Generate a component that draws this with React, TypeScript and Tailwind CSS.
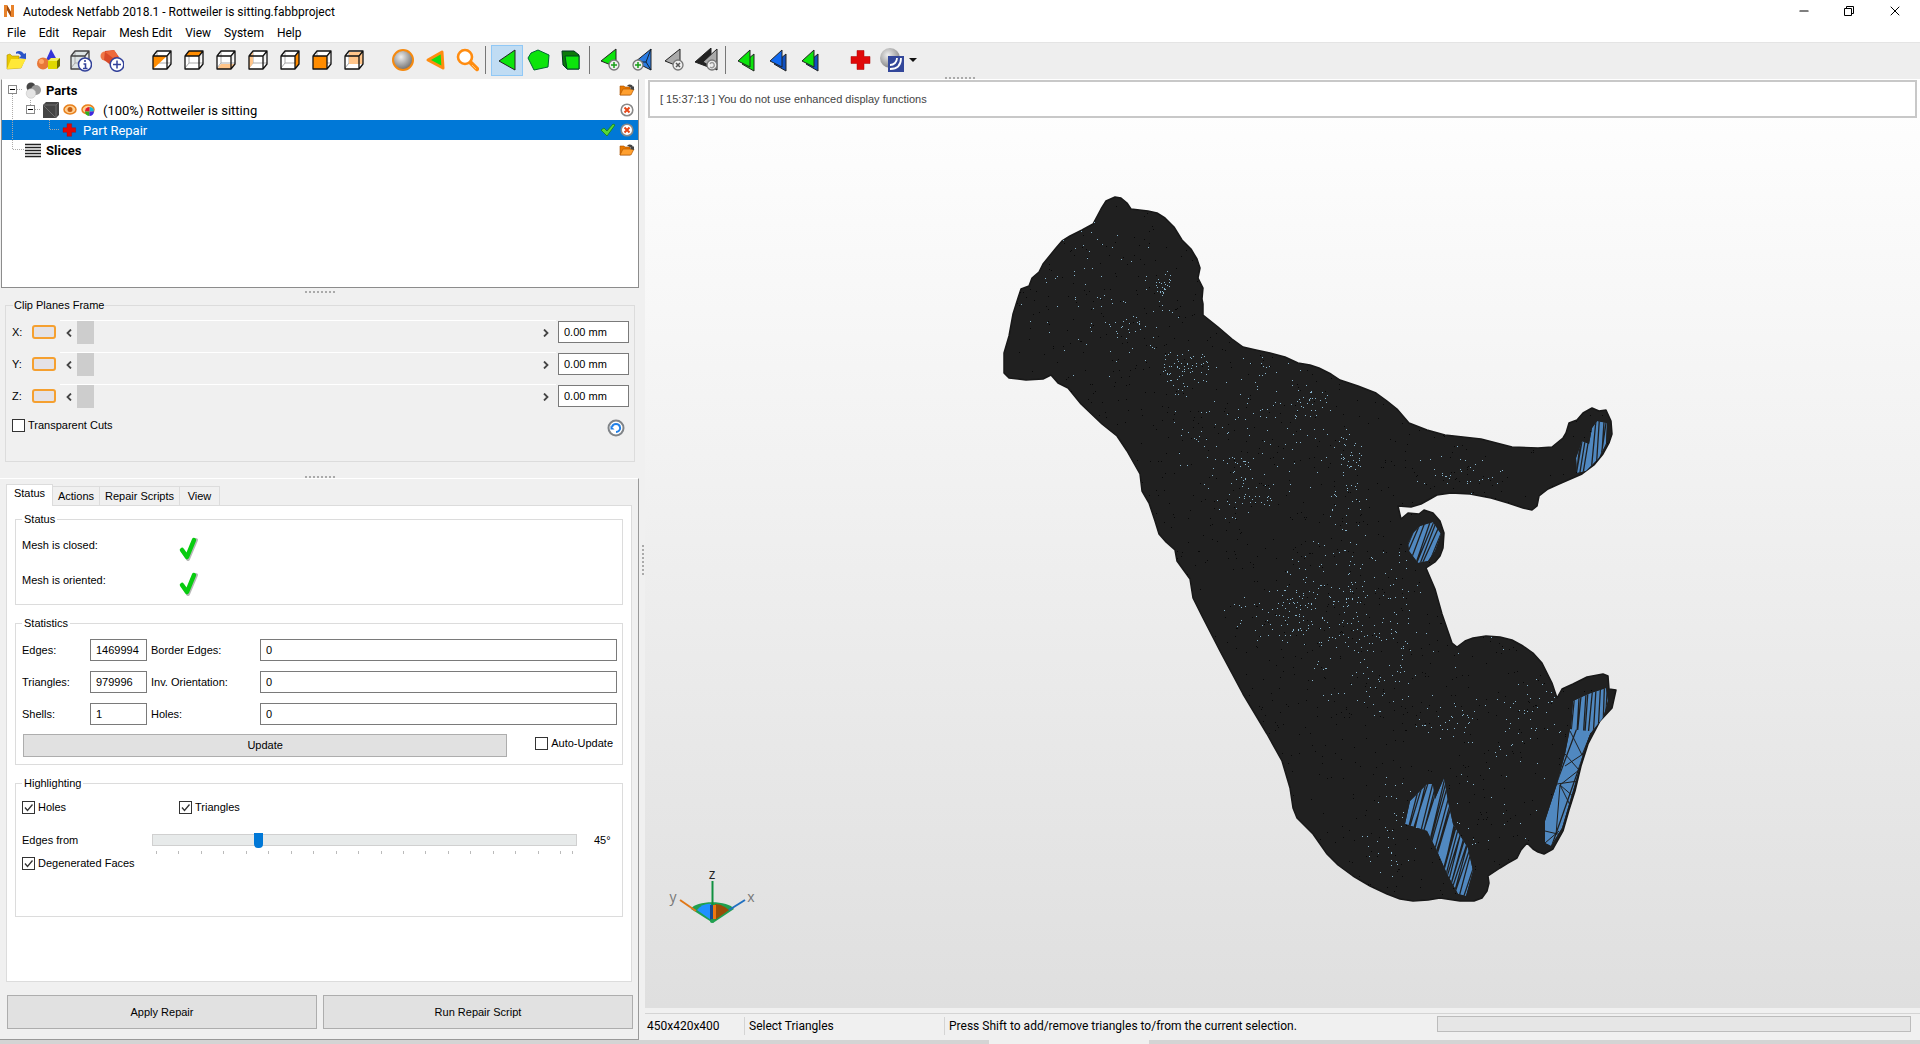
import type { ReactNode } from 'react';
import { Minus, X } from 'lucide-react';

type Point = [number, number];

const ui = 'font-["Liberation_Sans",Arial,sans-serif] text-[11px]';
const chrome = 'font-[Roboto,"Open_Sans",sans-serif] text-[12px]';

/* ---------- Toolbar icons ---------- */

function Svg({ children, size = 24 }: { children: ReactNode; size?: number }) {
  return (
    <svg width={size} height={size} viewBox="0 0 24 24" fill="none" className="shrink-0" aria-hidden="true">
      {children}
    </svg>
  );
}

function FolderIcon() {
  return (
    <Svg>
      <path d="M3 21V7l3-1 2 2h7v3h6l-4 9z" fill="#e8c800" stroke="#b08f00" strokeWidth="0.6" />
      <path d="M3 21 7 11h15l-5 9z" fill="#ffe838" />
      <path d="M12 4c3-2 6-1 8 2l2-1v6l-7-1 2-2c-1-2-3-3-5-2z" fill="#2a55c8" />
    </Svg>
  );
}

function ShapesIcon() {
  return (
    <Svg>
      <path d="M15 1 10 12h11z" fill="#3434d8" />
      <circle cx="7" cy="15.500" r="6" fill="#e87838" />
      <circle cx="5.5" cy="13.500" r="2.500" fill="#ffa868" />
      <path d="M12 13l3-3h9v8l-3 3h-9z" fill="#6b6b00" />
      <path d="M12 13h9v8h-9z" fill="#e0d800" />
      <path d="M12 13l3-3h9l-3 3z" fill="#f4f060" />
    </Svg>
  );
}

function WireCube({ stroke = '#111', children }: { stroke?: string; children?: ReactNode }) {
  return (
    <g stroke={stroke} strokeWidth="1.300" strokeLinejoin="round">
      <path d="M7 3v12h14M7 15l-4 5" stroke="#aaa" strokeWidth="1" />
      {children}
      <path d="M3 8h14v13H3zM3 8l4-5h14l-4 5M21 3v13l-4 5" />
    </g>
  );
}

function InfoCubeIcon() {
  return (
    <Svg>
      <path d="M3 8h14v13H3zM3 8l4-5h14l-4 5M21 3v13l-4 5" fill="#dde4e4" />
      <WireCube stroke="#444" />
      <circle cx="17" cy="16.500" r="6.500" fill="#fff" stroke="#33429a" strokeWidth="1.500" />
      <path d="M17 12v2M15.500 16h2v4.500M15 20.500h4.500" stroke="#33429a" strokeWidth="1.600" />
    </Svg>
  );
}

function AddPartIcon() {
  return (
    <Svg>
      <circle cx="5" cy="8" r="4.500" fill="#f07848" />
      <path d="M5 3 14 2l5 7-7 9L4 12z" fill="#d84a28" />
      <path d="M5 4 14 2l4 6-5 2z" fill="#ee6a3c" />
      <circle cx="17" cy="16.500" r="6.800" fill="#fff" stroke="#33429a" strokeWidth="1.500" />
      <path d="M17 12.500v8M13 16.500h8" stroke="#33429a" strokeWidth="1.500" />
    </Svg>
  );
}

const cubeFaces: { name: string; path: string; fill: string }[] = [
  { name: 'Isometric view', path: 'M3 8h14L3 21z', fill: '#ff8c00' },
  { name: 'Top view', path: 'M3 8l4-5h14l-4 5z', fill: '#ff8c00' },
  { name: 'Bottom view', path: 'M3 21l4-5h14l-4 5z', fill: '#ffc58a' },
  { name: 'Left view', path: 'M3 8l4-5v12l-4 6z', fill: '#ffc58a' },
  { name: 'Right view', path: 'M21 3v13l-4 5V8z', fill: '#ff8c00' },
  { name: 'Front view', path: 'M3 8h14v13H3z', fill: '#ff8c00' },
  { name: 'Back view', path: 'M7 4h14v12H7z', fill: '#ffc58a' },
];

function CubeViewIcon({ path, fill }: { path: string; fill: string }) {
  return (
    <Svg>
      <path d="M3 8h14v13H3zM3 8l4-5h14l-4 5M21 3v13l-4 5" fill="#fff" />
      <WireCube>
        <path d={path} fill={fill} stroke="none" />
      </WireCube>
    </Svg>
  );
}

function SphereIcon() {
  return (
    <Svg>
      <defs>
        <radialGradient id="steel" cx="0.400" cy="0.350" r="0.700">
          <stop offset="0" stopColor="#eee" />
          <stop offset="1" stopColor="#666" />
        </radialGradient>
      </defs>
      <circle cx="12" cy="12" r="10" fill="url(#steel)" stroke="#f58a10" strokeWidth="2" />
    </Svg>
  );
}

function ZoomTriangleIcon() {
  return (
    <Svg>
      <path d="M5 12 19 4l1 16z" fill="#10e010" stroke="#ff8c10" strokeWidth="3" strokeLinejoin="round" />
    </Svg>
  );
}

function MagnifierIcon() {
  return (
    <Svg>
      <circle cx="10" cy="9" r="7" fill="#fff" stroke="#ff8c10" strokeWidth="2.600" />
      <path d="M16 15l6 6" stroke="#ff8c10" strokeWidth="4.500" strokeLinecap="round" />
      <path d="M17 17l4 4" stroke="#ffc070" strokeWidth="1" />
    </Svg>
  );
}

function Triangle({ fill = '#0ce40c', d = 'M4 13 20 2v20z' }: { fill?: string; d?: string }) {
  return <path d={d} fill={fill} stroke="#222" strokeWidth="1" strokeLinejoin="round" />;
}

function PentagonIcon() {
  return (
    <Svg>
      <path d="M11 2 22 7l-1 12-14 3L1 10l3-5z" fill="#0ce40c" stroke="#063" strokeWidth="1" />
    </Svg>
  );
}

function GreenCubeIcon() {
  return (
    <Svg>
      <path d="M3 3h12l5 4v14H8l-4-4z" fill="#0a7a0a" stroke="#032" />
      <path d="M6 8h14v13H8z" fill="#0ce40c" stroke="#042" />
    </Svg>
  );
}

function Badge({ cx, sign, color }: { cx: number; sign: string; color: string }) {
  return (
    <>
      <circle cx={cx} cy="17" r="5" fill="#eee" stroke="#777" strokeWidth="1.300" />
      <path d={sign} stroke={color} strokeWidth="1.500" />
    </>
  );
}

function DoubleTriangle({ front, back }: { front: string; back: string }) {
  return (
    <Svg>
      <Triangle fill={back} d="M7 16 19 6v17z" />
      <Triangle fill={front} d="M3 13 15 2v17z" />
    </Svg>
  );
}

function RedCross({ size = 24 }: { size?: number }) {
  return (
    <Svg size={size}>
      <path d="M9 2.500h7v6h6v7h-6v6h-7v-6h-6v-7h6z" fill="#e00808" stroke="#a80000" strokeOpacity="0.500" />
    </Svg>
  );
}

function ScanIcon() {
  return (
    <Svg>
      <circle cx="10" cy="10" r="10" fill="url(#steel)" fillOpacity="0.800" />
      <path d="M8 8h16v16H8z" fill="#33479a" />
      <path d="M10 21c7 0 11-4 11-11M10 17c4 0 7-3 7-7" stroke="#fff" strokeWidth="1.800" />
    </Svg>
  );
}

function ToolButton({ label, active, children }: { label: string; active?: boolean; children: ReactNode }) {
  return (
    <button
      type="button"
      aria-label={label}
      className={
        active
          ? 'flex h-[31px] w-8 shrink-0 items-center justify-center border border-[#90c8f6] bg-[#c0dcf3]'
          : 'flex h-[31px] w-8 shrink-0 items-center justify-center'
      }
    >
      {children}
    </button>
  );
}

function ToolSeparator() {
  return <div className="mr-[5px] ml-[2px] h-7 w-px shrink-0 bg-[#777]" />;
}

function Toolbar() {
  return (
    <div className="flex h-[37px] items-center border-t border-[#e4e4e4] bg-[#eeeeee] pb-[2px]">
      <ToolButton label="Open"><FolderIcon /></ToolButton>
      <ToolButton label="Add primitive"><ShapesIcon /></ToolButton>
      <ToolButton label="Part information"><InfoCubeIcon /></ToolButton>
      <ToolButton label="Add part"><AddPartIcon /></ToolButton>
      <div className="w-[18px] shrink-0" />
      {cubeFaces.map((face) => (
        <ToolButton key={face.name} label={face.name}>
          <CubeViewIcon path={face.path} fill={face.fill} />
        </ToolButton>
      ))}
      <div className="w-[17px] shrink-0" />
      <ToolButton label="Zoom to part"><SphereIcon /></ToolButton>
      <ToolButton label="Zoom to triangle"><ZoomTriangleIcon /></ToolButton>
      <ToolButton label="Zoom"><MagnifierIcon /></ToolButton>
      <ToolSeparator />
      <ToolButton label="Select triangles" active><Svg><Triangle /></Svg></ToolButton>
      <ToolButton label="Select surfaces"><PentagonIcon /></ToolButton>
      <ToolButton label="Select shells"><GreenCubeIcon /></ToolButton>
      <ToolSeparator />
      <ToolButton label="Expand selection">
        <Svg><Triangle d="M2 13 17 1v18z" /><Badge cx={15} sign="M15 14v6M12 17h6" color="#18a018" /></Svg>
      </ToolButton>
      <ToolButton label="Shrink selection">
        <Svg>
          <Triangle fill="#2a7ae0" d="M4 14 20 1v21z" />
          <path d="M20 1l-5 13 5 8M4 14h11" stroke="#123" />
          <Badge cx={7} sign="M7 14v6M4 17h6" color="#18a018" />
        </Svg>
      </ToolButton>
      <ToolButton label="Remove selected">
        <Svg><Triangle fill="#aaa" d="M2 13 17 1v18z" /><Badge cx={15} sign="M13 15l4 4M17 15l-4 4" color="#555" /></Svg>
      </ToolButton>
      <ToolButton label="Revert selection">
        <Svg>
          <Triangle fill="#222" d="M0 14 16 0v20z" />
          <Triangle fill="#aaa" d="M8 14 22 1v21z" />
          <Badge cx={17} sign="M15 19c3 2 5-1 4-3s-3-2-4 0" color="#999" />
        </Svg>
      </ToolButton>
      <ToolSeparator />
      <ToolButton label="Add triangles"><DoubleTriangle front="#0ce40c" back="#0ce40c" /></ToolButton>
      <ToolButton label="Flip triangles"><DoubleTriangle front="#1068f0" back="#1050c0" /></ToolButton>
      <ToolButton label="Mark triangles"><DoubleTriangle front="#0ce40c" back="#1050c0" /></ToolButton>
      <div className="w-[17px] shrink-0" />
      <ToolButton label="Repair"><RedCross /></ToolButton>
      <ToolButton label="Display mode"><ScanIcon /></ToolButton>
      <button type="button" aria-label="More display modes" className="px-px">
        <svg width="8" height="4" viewBox="0 0 8 4"><path d="M0 0h8L4 4z" fill="#111" /></svg>
      </button>
    </div>
  );
}

/* ---------- Title and menu ---------- */

const menuItems = ['File', 'Edit', 'Repair', 'Mesh Edit', 'View', 'System', 'Help'];

function TitleBar() {
  return (
    <header className={`bg-white text-black ${chrome}`}>
      <div className="flex h-[22px] items-center">
        <svg width="12" height="14" viewBox="0 0 12 14" className="ml-[3px]" aria-hidden="true">
          <path d="M1 13V1h3l4 7V1h3v12H8L4 6v7z" fill="#e8822a" />
          <path d="M4 1l4 7v5L4 6z" fill="#9c4a10" />
        </svg>
        <h1 className="ml-2 pt-px">Autodesk Netfabb 2018.1 - Rottweiler is sitting.fabbproject</h1>
        <div className="ml-auto flex items-center gap-[32px] pr-[17px]">
          <button type="button" aria-label="Minimize"><Minus size={14} strokeWidth={2} /></button>
          <button type="button" aria-label="Restore">
            <svg width="12" height="12" viewBox="0 0 12 12" fill="none" stroke="#000">
              <path d="M1.500 3.500h7v7h-7zM3.500 3.500v-2h7v7h-2" />
            </svg>
          </button>
          <button type="button" aria-label="Close"><X size={16} strokeWidth={1.500} /></button>
        </div>
      </div>
      <nav className="flex h-5 items-center gap-[13px] pt-[2px] pl-[7px]">
        {menuItems.map((item) => (
          <button key={item} type="button">{item}</button>
        ))}
      </nav>
    </header>
  );
}

/* ---------- Parts tree ---------- */

function TreeLines({ width, dots, box }: { width: number; dots: string; box?: number }) {
  return (
    <svg width={width} height="20" viewBox={`0 0 ${width} 20`} fill="none" className="shrink-0" shapeRendering="crispEdges">
      <path d={dots} stroke="#aaa" strokeDasharray="1 1" />
      {box !== undefined && (
        <>
          <rect x={box + 0.5} y="5.500" width="8" height="8" fill="#fff" stroke="#888" />
          <path d={`M${box + 2} 9.500h5`} stroke="#000" />
        </>
      )}
    </svg>
  );
}

function OpenFolderButton() {
  return (
    <button type="button" aria-label="Load">
      <svg width="16" height="14" viewBox="0 0 16 14" aria-hidden="true">
        <path d="M1 12V3h4l1 1h5v3h3l-3 5z" fill="#e87800" stroke="#a85000" strokeWidth="0.600" />
        <path d="M1 12 4 6h11l-3 6z" fill="#ffa030" stroke="#a85000" strokeWidth="0.600" />
        <path d="M8 3c2-2 5-2 6 1l1-1v4l-4-1 1-1c-1-1-2-2-4-2z" fill="#444" />
      </svg>
    </button>
  );
}

function RemoveButton() {
  return (
    <button type="button" aria-label="Remove" className="mr-px">
      <svg width="14" height="14" viewBox="0 0 14 14" aria-hidden="true">
        <circle cx="7" cy="7" r="5.800" fill="#fff" stroke="#888" strokeWidth="1.600" />
        <path d="M4.500 4.500l5 5M9.500 4.500l-5 5" stroke="#e84818" strokeWidth="2" />
      </svg>
    </button>
  );
}

function Eye({ colored }: { colored?: boolean }) {
  return (
    <svg width="14" height="14" viewBox="0 0 14 14" className="mr-[4px]" aria-hidden="true">
      <ellipse cx="7" cy="6.500" rx="6" ry="4.500" fill="#ffcf90" stroke="#e8801c" strokeWidth="1.500" />
      {colored ? (
        <>
          <path d="M8.500 8.500V4a4.500 4.500 0 0 1 4.500 4.500z" fill="#10b8d8" />
          <path d="M8.500 8.500H4A4.500 4.500 0 0 1 8.500 4z" fill="#e01830" />
          <path d="M8.500 8.500V13A4.500 4.500 0 0 1 4 8.500z" fill="#30b020" />
          <path d="M8.500 8.500H13A4.500 4.500 0 0 1 8.500 13z" fill="#4028e0" />
        </>
      ) : (
        <circle cx="7" cy="6.500" r="2.500" fill="#c86010" />
      )}
    </svg>
  );
}

function PartsTree() {
  return (
    <ul className='mr-px ml-px h-[209px] border border-[#8c8c8c] border-t-transparent bg-white font-[Roboto,"Open_Sans",sans-serif] text-[13px] leading-5 text-black'>
      <li className="flex h-5 items-center pr-[3px]">
        <TreeLines width={23} dots="M13 9.500h8M10.500 14v6" box={6} />
        <svg width="17" height="17" viewBox="0 0 17 17" aria-hidden="true">
          <circle cx="6" cy="5" r="4.500" fill="#444" />
          <circle cx="11" cy="8" r="5" fill="#999" />
          <circle cx="6" cy="11.500" r="4.800" fill="#e4e4e4" stroke="#bbb" strokeWidth="0.500" />
        </svg>
        <span className="ml-1 flex-1 pt-[2px] font-bold">Parts</span>
        <OpenFolderButton />
      </li>
      <li className="flex h-5 items-center pr-[3px]">
        <TreeLines width={41} dots="M10.500 0v20M28.500 0v6M33 9.500h6" box={24} />
        <svg width="16" height="16" viewBox="0 0 16 16" className="mr-[4px]" aria-hidden="true">
          <path d="M0 3l3-3h13v13l-3 3H0z" fill="#444" />
          <path d="M0 3h13v13M13 3l3-3M1 4l11 11" stroke="#777" strokeWidth="0.800" fill="none" />
        </svg>
        <Eye />
        <Eye colored />
        <span className="ml-[4px] flex-1 pt-[2px]">(100%) Rottweiler is sitting</span>
        <RemoveButton />
      </li>
      <li className="flex h-5 items-center bg-[#0078d7] pr-[3px] text-white">
        <TreeLines width={59} dots="M10.500 0v20M47.500 0v9.500h10" />
        <RedCross size={16} />
        <span className="ml-[6px] flex-1 pt-[2px]">Part Repair</span>
        <svg width="16" height="14" viewBox="0 0 16 14" className="mr-1" aria-hidden="true">
          <path d="M1 7l3-2 3 3 6-7 2 1-8 11z" fill="#58d838" stroke="#188010" strokeWidth="0.800" />
        </svg>
        <RemoveButton />
      </li>
      <li className="flex h-5 items-center pr-[3px]">
        <TreeLines width={23} dots="M10.500 0v9.500h11" />
        <svg width="16" height="15" viewBox="0 0 16 15" aria-hidden="true">
          <path d="M0 1.500h16M0 4.500h16M0 7.500h16M0 10.500h16M0 13.500h16" stroke="#222" strokeWidth="1.500" />
        </svg>
        <span className="ml-[5px] flex-1 pt-[2px] font-bold">Slices</span>
        <OpenFolderButton />
      </li>
    </ul>
  );
}

/* ---------- Shared controls ---------- */

function Grip({ className = '' }: { className?: string }) {
  return <div className={`w-[30px] border-t-2 border-dotted border-[#aaa] ${className}`} />;
}

function CheckBox({ label, checked = false }: { label: string; checked?: boolean }) {
  return (
    <label className="relative flex h-4 items-center gap-[3px]">
      <input
        type="checkbox"
        defaultChecked={checked}
        className="peer size-[13px] appearance-none border border-[#333] bg-white"
      />
      <svg
        viewBox="0 0 13 13"
        fill="none"
        className="pointer-events-none invisible absolute left-0 size-[13px] peer-checked:visible"
      >
        <path d="M3 6.500l2.500 3L10.500 3.500" stroke="#333" strokeWidth="1.300" />
      </svg>
      <span>{label}</span>
    </label>
  );
}

function ClipRow({ axis }: { axis: string }) {
  const id = `clip-${axis}`;
  return (
    <div className="flex h-8 items-center">
      <label htmlFor={id} className="w-5">{axis}:</label>
      <button
        type="button"
        aria-label={`Toggle ${axis} plane`}
        className="h-[14px] w-6 rounded-[3px] border-2 border-[#f5a030] bg-[#e4e2e6]"
      />
      <div className="ml-1 flex h-6 flex-1 items-center border-t border-white">
        <button type="button" aria-label={`Decrease ${axis}`} className="flex w-[17px] justify-center">
          <svg width="6" height="8" viewBox="0 0 6 8" fill="none"><path d="M5 0.500 1.500 4 5 7.500" stroke="#444" strokeWidth="1.800" /></svg>
        </button>
        <input
          type="range"
          aria-label={`${axis} position`}
          defaultValue={0}
          className="h-[23px] min-w-0 flex-1 appearance-none bg-transparent [&::-webkit-slider-thumb]:h-[23px] [&::-webkit-slider-thumb]:w-[17px] [&::-webkit-slider-thumb]:appearance-none [&::-webkit-slider-thumb]:bg-[#cdcdcd]"
        />
        <button type="button" aria-label={`Increase ${axis}`} className="flex w-5 justify-center">
          <svg width="6" height="8" viewBox="0 0 6 8" fill="none"><path d="M1 0.500 4.500 4 1 7.500" stroke="#444" strokeWidth="1.800" /></svg>
        </button>
      </div>
      <input
        id={id}
        defaultValue="0.00 mm"
        className="ml-[2px] h-[22px] w-[71px] border border-[#7a7a7a] bg-white px-[5px]"
      />
    </div>
  );
}

function ClipPlanes() {
  return (
    <fieldset className="mx-[5px] mt-1 h-[165px] border border-[#dcdcdc] pr-[5px] pl-[6px]">
      <legend className="ml-px px-[1px] leading-4">Clip Planes Frame</legend>
      <div className="pt-[3px]">
        <ClipRow axis="X" />
        <ClipRow axis="Y" />
        <ClipRow axis="Z" />
      </div>
      <div className="flex items-start justify-between pt-[5px] pr-1">
        <CheckBox label="Transparent Cuts" />
        <button type="button" aria-label="Reset clip planes" className="mt-[2px]">
          <svg width="18" height="18" viewBox="0 0 18 18" fill="none">
            <circle cx="9" cy="9" r="7.500" fill="#fff" stroke="#808488" strokeWidth="2" />
            <path d="M5 8c1-4 7-4 8 0 1 3-2 5-4 5" stroke="#2080e8" strokeWidth="2" />
            <path d="M3.500 6.500v4h4z" fill="#2080e8" />
          </svg>
        </button>
      </div>
    </fieldset>
  );
}

/* ---------- Repair panel ---------- */

const statusRows = ['Mesh is closed:', 'Mesh is oriented:'];

const statistics = [
  { label: 'Edges:', value: '1469994', other: 'Border Edges:', otherValue: '0' },
  { label: 'Triangles:', value: '979996', other: 'Inv. Orientation:', otherValue: '0' },
  { label: 'Shells:', value: '1', other: 'Holes:', otherValue: '0' },
];

function Group({ title, className, children }: { title: string; className: string; children: ReactNode }) {
  return (
    <fieldset className={`border border-[#dcdcdc] pl-[6px] ${className}`}>
      <legend className="px-[2px] leading-4">{title}</legend>
      {children}
    </fieldset>
  );
}

function OkMark() {
  return (
    <svg width="20" height="26" viewBox="0 0 20 26" fill="none" strokeLinecap="round" strokeLinejoin="round">
      <path d="M5 16l5 8L18 5" stroke="#888" strokeOpacity="0.600" strokeWidth="4" />
      <path d="M4 15l5 7L16 5" stroke="#08cc10" strokeWidth="4.500" />
    </svg>
  );
}

function RepairPanel() {
  return (
    <section className="mr-px flex flex-1 flex-col border-t border-r border-b border-t-white border-r-[#999] border-b-[#999] pt-1 pr-[5px] pb-[10px] pl-[6px]">
      <div role="tablist" className="flex h-[22px] items-end">
        <button role="tab" aria-selected="true" type="button" className="relative z-10 -mb-px h-[22px] w-[47px] border border-b-0 border-[#dcdcdc] bg-white pb-1">Status</button>
        <button role="tab" aria-selected="false" type="button" className="h-[19px] w-[47px] border-t border-r border-[#dcdcdc]">Actions</button>
        <button role="tab" aria-selected="false" type="button" className="h-[19px] w-[80px] border-t border-r border-[#dcdcdc]">Repair Scripts</button>
        <button role="tab" aria-selected="false" type="button" className="h-[19px] w-[40px] border-t border-r border-[#dcdcdc]">View</button>
      </div>
      <div className="mr-[1px] flex-1 border border-[#dcdcdc] bg-white px-2 pt-[5px]">
        <Group title="Status" className="h-[94px]">
          <div className="pt-2">
            {statusRows.map((row) => (
              <div key={row} className="flex h-[35px] items-start">
                <span className="w-[156px] pt-[2px] leading-4">{row}</span>
                <OkMark />
              </div>
            ))}
          </div>
        </Group>

        <Group title="Statistics" className="mt-[10px] h-[150px] pr-[5px]">
          <div className="pt-[3px]">
            {statistics.map((row) => (
              <div key={row.label} className="flex h-8 items-center">
                <label htmlFor={row.label} className="w-[68px]">{row.label}</label>
                <input id={row.label} readOnly defaultValue={row.value} className="h-[22px] w-[57px] border border-[#7a7a7a] px-[5px]" />
                <label htmlFor={row.other} className="ml-1 w-[109px]">{row.other}</label>
                <input id={row.other} readOnly defaultValue={row.otherValue} className="h-[22px] min-w-0 flex-1 border border-[#7a7a7a] px-[5px]" />
              </div>
            ))}
          </div>
          <div className="flex items-start pt-1 pr-1 pl-px">
            <button type="button" className="h-[23px] flex-1 border border-[#adadad] bg-[#e1e1e1]">Update</button>
            <div className="ml-7 pt-px">
              <CheckBox label="Auto-Update" />
            </div>
          </div>
        </Group>

        <Group title="Highlighting" className="mt-[10px] h-[142px] pr-[5px]">
          <div className="flex pt-2">
            <div className="w-[157px]"><CheckBox label="Holes" checked /></div>
            <CheckBox label="Triangles" checked />
          </div>
          <div className="flex items-start pt-[17px]">
            <label htmlFor="edge-angle" className="w-[130px] leading-4">Edges from</label>
            <div className="flex-1 pt-[2px]">
              <input
                id="edge-angle"
                type="range"
                min={0}
                max={185}
                defaultValue={45}
                className="block h-[12px] w-full appearance-none border border-[#d0d0d0] bg-[#e7eaea] [&::-webkit-slider-thumb]:h-[15px] [&::-webkit-slider-thumb]:w-[9px] [&::-webkit-slider-thumb]:appearance-none [&::-webkit-slider-thumb]:rounded-b-[4px] [&::-webkit-slider-thumb]:bg-[#0078d7]"
              />
              <div className="mx-1 mt-[5px] flex h-[3px] border-r border-[#bbb]">
                {Array.from({ length: 18 }, (_, i) => (
                  <span key={i} className="flex-[2] border-l border-[#bbb]" />
                ))}
                <span className="flex-1 border-l border-[#bbb]" />
              </div>
            </div>
            <output htmlFor="edge-angle" className="w-10 pl-[17px] leading-4">45°</output>
          </div>
          <div className="pt-px">
            <CheckBox label="Degenerated Faces" checked />
          </div>
        </Group>
      </div>
      <div className="mt-[13px] ml-px flex gap-[6px]">
        <button type="button" className="h-[34px] flex-1 border border-[#adadad] bg-[#e1e1e1]">Apply Repair</button>
        <button type="button" className="h-[34px] flex-1 border border-[#adadad] bg-[#e1e1e1]">Run Repair Script</button>
      </div>
    </section>
  );
}

/* ---------- 3D viewport ---------- */

const bodyOutline =
  '1115,196 1106,200 1101,208 1093,223 1082,229 1070,235 1062,240 1056,247 1043,263 1039,271 1032,277 1029,285 1021,288 1018,297 1013,313 1009,335 1004,352 1004,372 1009,377 1026,379 1043,378 1051,374 1058,382 1068,387 1081,403 1102,423 1117,435 1127,450 1140,473 1142,490 1149,502 1155,520 1159,533 1166,541 1175,549 1177,560 1190,578 1193,597 1202,615 1220,650 1243,693 1267,733 1282,760 1290,787 1293,807 1297,817 1313,833 1327,853 1338,864 1353,875 1370,885 1387,893 1400,898 1413,900 1428,899 1440,897 1460,900 1474,900 1482,897 1487,890 1489,882 1488,875 1500,867 1508,862 1517,857 1521,849 1527,842 1533,848 1538,851 1544,853 1553,848 1563,830 1569,809 1575,790 1581,765 1588,743 1600,720 1612,707 1616,689 1609,688 1608,675 1603,673 1587,676 1573,683 1562,688 1557,697 1552,682 1542,662 1533,652 1523,645 1512,639 1500,636 1486,635 1473,637 1465,640 1457,646 1452,642 1442,613 1435,588 1426,567 1435,561 1440,555 1443,547 1444,532 1440,520 1433,512 1424,509 1419,513 1408,512 1401,518 1398,505 1411,506 1421,503 1430,498 1437,494 1451,492 1470,493 1491,497 1508,502 1523,507 1532,509 1537,505 1539,495 1548,488 1559,483 1582,473 1594,464 1603,453 1609,442 1612,433 1611,420 1606,409 1599,410 1592,407 1583,412 1577,419 1569,422 1566,432 1563,437 1552,446 1538,447 1512,446 1481,438 1445,434 1427,429 1409,422 1397,408 1387,400 1376,392 1358,385 1340,379 1331,373 1319,367 1310,364 1298,362 1285,356 1270,352 1256,349 1243,346 1232,338 1218,326 1203,314 1203,303 1202,298 1203,287 1198,277 1200,267 1197,258 1191,248 1182,239 1174,226 1165,217 1157,212 1148,210 1131,208 1127,202 1121,197';

type Patch = { id: string; points: string; box: [number, number, number, number]; slope: number; gap: number };

const patches: Patch[] = [
  { id: 'frontPaw', points: '1597,420 1607,422 1606,443 1599,457 1586,470 1577,472 1576,457 1582,440 1589,443 1592,427', box: [1572, 418, 1610, 474], slope: 0.12, gap: 4 },
  { id: 'backPaw', points: '1420,525 1433,521 1441,533 1435,550 1428,560 1418,562 1409,550 1408,542 1413,532', box: [1398, 519, 1446, 564], slope: 0.4, gap: 4 },
  { id: 'heel', points: '1573,700 1588,693 1606,687 1608,700 1603,717 1590,733 1586,743 1570,742', box: [1558, 686, 1612, 743], slope: 0.08, gap: 3 },
  { id: 'sole', points: '1570,728 1591,730 1583,753 1575,783 1570,800 1562,827 1551,845 1545,842 1545,820 1557,783 1565,753', box: [1545, 728, 1592, 846], slope: 0.35, gap: 12 },
  { id: 'thigh', points: '1410,800 1427,783 1433,783 1435,798 1444,777 1448,800 1453,823 1468,847 1473,870 1466,895 1458,893 1447,873 1437,850 1427,830 1405,823', box: [1390, 776, 1478, 896], slope: 0.28, gap: 3 },
];

// cx, cy, rx, ry, count
const speckClusters: [number, number, number, number, number][] = [
  [1100, 300, 80, 80, 80],
  [1162, 280, 10, 12, 24],
  [1185, 370, 26, 26, 70],
  [1125, 325, 20, 12, 20],
  [1260, 430, 90, 75, 140],
  [1308, 398, 20, 14, 22],
  [1350, 455, 14, 36, 36],
  [1245, 490, 30, 40, 40],
  [1460, 470, 50, 26, 34],
  [1345, 505, 22, 26, 26],
  [1350, 590, 70, 60, 150],
  [1290, 615, 70, 30, 90],
  [1365, 670, 55, 45, 80],
  [1450, 720, 30, 20, 30],
  [1530, 710, 25, 35, 30],
  [1480, 690, 90, 90, 40],
  [1390, 825, 30, 50, 40],
  [1500, 800, 50, 60, 24],
];

function createRandom(seed: number) {
  let state = seed;
  return () => {
    state = (state * 16807) % 2147483647;
    return state / 2147483647;
  };
}

function specks(): string {
  const random = createRandom(77);
  return speckClusters
    .flatMap(([cx, cy, rx, ry, count]) =>
      Array.from({ length: count }, () => {
        const angle = random() * Math.PI * 2;
        const radius = Math.pow(random(), 0.6);
        return `M${Math.round(cx + Math.cos(angle) * rx * radius)} ${Math.round(cy + Math.sin(angle) * ry * radius)}h1v1h-1z`;
      }),
    )
    .join('');
}

function darkSpecks(): string {
  const random = createRandom(191);
  return Array.from({ length: 2200 }, () => {
    return `M${1004 + Math.round(random() * 610)} ${200 + Math.round(random() * 700)}h1v1h-1z`;
  }).join('');
}

function hatch({ box, slope, gap }: Patch): string {
  const random = createRandom(box[0]);
  const [x0, y0, x1, y1] = box;
  const height = y1 - y0;
  const lines: string[] = [];
  for (let x = x0; x < x1 + height * slope; x += gap * (0.5 + random())) {
    const end: Point = [x - height * (slope + (random() - 0.5) * 0.12), y1];
    lines.push(`M${x.toFixed(1)} ${y0}L${end[0].toFixed(1)} ${end[1]}`);
  }
  return lines.join('');
}

function Model() {
  return (
    <g>
      <defs>
        <clipPath id="body"><polygon points={bodyOutline} /></clipPath>
        {patches.map((patch) => (
          <clipPath key={patch.id} id={patch.id}><polygon points={patch.points} /></clipPath>
        ))}
      </defs>
      <polygon points={bodyOutline} fill="#202020" stroke="#181818" strokeWidth="1.500" strokeLinejoin="round" />
      <g clipPath="url(#body)" shapeRendering="crispEdges">
        <path d={darkSpecks()} fill="#080808" />
        <path d={specks()} fill="#88b4cc" />
      </g>
      {patches.map((patch) => (
        <g key={patch.id} clipPath={`url(#${patch.id})`}>
          <polygon points={patch.points} fill="#5088c0" />
          <path d={hatch(patch)} stroke="#202020" strokeWidth="1.300" fill="none" />
        </g>
      ))}
      <path
        d="M1565 753l14 16-19 15M1557 783l21-3M1560 784l14 12M1560 784l12 24M1560 784l-4 50M1545 830l17 4M1545 842l14-12M1583 753l-18 12M1570 730l12 24 9-22"
        stroke="#202020"
        fill="none"
        clipPath="url(#body)"
      />
    </g>
  );
}

function AxisGizmo() {
  return (
    <g>
      <path d="M691 908c4-9 38-9 43 0l-21 14z" fill="#20a050" />
      <path d="M697 909c4-5 10-7 14-6v16z" fill="#2090ff" />
      <path d="M715 903c6 0 10 3 14 6l-14 10z" fill="#9a4c08" />
      <path d="M710 904h3v15h-3z" fill="#184a90" />
      <path d="M713 904h3v14h-3z" fill="#f07810" />
      <path d="M712.500 880v24" stroke="#109040" strokeWidth="2" />
      <path d="M680 899l16 11" stroke="#e07818" strokeWidth="2" />
      <path d="M745 899l-16 10" stroke="#2070c0" strokeWidth="2" />
      <circle cx="712" cy="920" r="2" fill="#20a050" />
      <g fontSize="14" fontFamily="Open Sans, sans-serif" textAnchor="middle">
        <text x="712" y="878" fill="#222">z</text>
        <text x="673" y="901" fill="#777">y</text>
        <text x="751" y="901" fill="#777">x</text>
      </g>
    </g>
  );
}

function Viewport() {
  return (
    <main className="relative flex min-w-0 flex-1 flex-col">
      <Grip className="absolute -top-[2px] left-[300px]" />
      <div className="flex flex-1 flex-col bg-linear-to-b from-white to-[#dfdfdf]">
        <div className={`mt-px mr-[3px] ml-[3px] flex h-[38px] items-center border-2 border-[#c8c8c8] bg-white pl-[10px] text-[#444] ${ui}`}>
          [ 15:37:13 ] You do not use enhanced display functions
        </div>
        <svg viewBox="645 117 1275 890" className="w-full flex-1" role="img" aria-label="Rottweiler mesh">
          <Model />
          <AxisGizmo />
        </svg>
      </div>
      <footer className={`mt-[5px] flex h-[27px] items-center border-t border-[#d4d4d4] pb-[2px] text-black ${chrome}`}>
        <span className="w-[99px] pl-[2px]">450x420x400</span>
        <span className="w-[200px] border-l border-[#d4d4d4] pl-1">Select Triangles</span>
        <span className="flex-1 border-l border-[#d4d4d4] pl-1">Press Shift to add/remove triangles to/from the current selection.</span>
        <div role="progressbar" aria-label="Progress" className="mr-[9px] mb-1 h-4 w-[474px] border border-[#bcbcbc] bg-[#e6e6e6]" />
      </footer>
    </main>
  );
}

export default function App() {
  return (
    <div className="flex min-h-screen flex-col bg-[#f0f0f0]">
      <TitleBar />
      <Toolbar />
      <div className="flex flex-1">
        <aside className={`flex w-[640px] shrink-0 flex-col text-black ${ui}`}>
          <PartsTree />
          <Grip className="mx-auto mt-[3px]" />
          <ClipPlanes />
          <Grip className="mx-auto mt-[14px]" />
          <RepairPanel />
        </aside>
        <div className="flex w-[5px] shrink-0 items-center justify-center">
          <div className="h-[30px] border-l-2 border-dotted border-[#aaa]" />
        </div>
        <Viewport />
      </div>
      <div className="flex h-1 bg-[#d4d4d4]">
        <div className="ml-[51.5%] w-[160px] bg-[#f0f0f0]" />
      </div>
    </div>
  );
}
